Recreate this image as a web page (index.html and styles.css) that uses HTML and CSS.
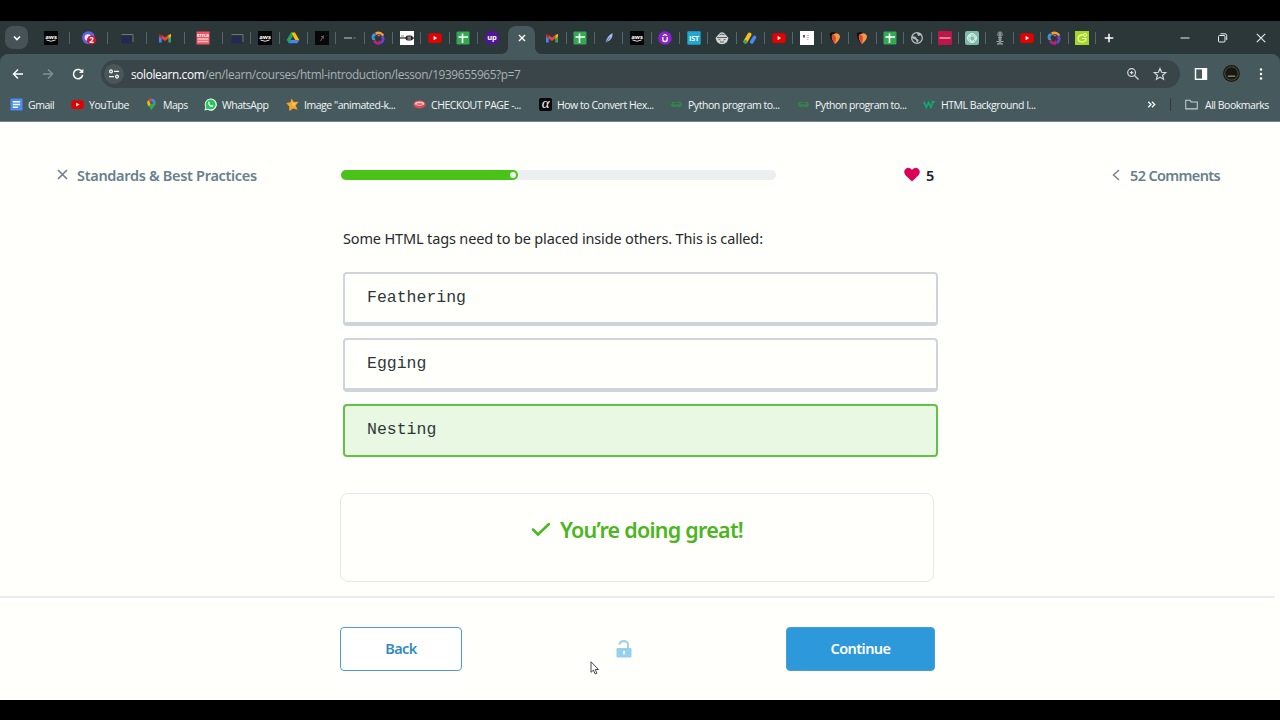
FILE: index.html
```html
<!DOCTYPE html>
<html lang="en">
<head>
    <meta charset="UTF-8">
    <meta name="viewport" content="width=device-width, initial-scale=1.0">
    <title>HTML Introduction</title>
    <link rel="stylesheet" href="styles.css">
</head>
<body>
    <!-- Shared favicons -->
    <svg class="sprite" width="0" height="0">
        <symbol id="aws" viewBox="0 0 14 14">
            <rect width="14" height="14" fill="#050505"/>
            <text x="7" y="7.500" font-size="6" font-weight="700" text-anchor="middle" fill="#fff">aws</text>
            <path d="M2.500 9q4.500 2.500 9 0" fill="none" stroke="#ddd" stroke-width="1"/>
        </symbol>
        <symbol id="laptop" viewBox="0 0 14 14">
            <path d="M1.500 3.500H13V11" fill="none" stroke="#77736a" stroke-width="1"/>
            <path d="M1.500 5h10v7.500h-10z" fill="#222a50"/>
        </symbol>
        <symbol id="gmail" viewBox="0 0 14 14">
            <path d="M1 3.500v8h2.700V6z" fill="#4285f4"/>
            <path d="M10.300 6v5.500H13v-8z" fill="#34a853"/>
            <path d="M1 3l2.700 1v3.500L1 5.500z" fill="#c5221f"/>
            <path d="M13 3l-2.700 1v3.500L13 5.500z" fill="#fbbc04"/>
            <path d="M3.700 4L7 6.500 10.300 4v3.500L7 10 3.700 7.500z" fill="#ea4335"/>
        </symbol>
        <symbol id="youtube" viewBox="0 0 14 14">
            <rect x="0.300" y="2.300" width="13.400" height="9.600" rx="2.500" fill="#e60000"/>
            <path d="M5.600 5v4.200L9.200 7.100z" fill="#fff"/>
        </symbol>
        <symbol id="sheets" viewBox="0 0 14 14">
            <rect x="0.500" y="0.500" width="13" height="13" rx="1" fill="#34a853"/>
            <path d="M6.500 2.500v9.500M2.500 6h9.500" stroke="#fff" stroke-width="1.600"/>
        </symbol>
        <symbol id="sololearn" viewBox="0 0 14 14">
            <path d="M4 1.500Q9-1.500 13 3.500L12 6Q9 1.500 5.500 4z" fill="#f0a03c"/>
            <path d="M12.500 4.500Q15.500 9.500 10.500 13L8.500 12Q12.500 9 9.500 6z" fill="#6a45cc"/>
            <path d="M9 13.700Q3.500 14.500 2 10L4 9.500Q7 12.500 9.500 8.500z" fill="#c41c78"/>
            <path d="M1.500 9Q-1 4.500 3 2L5.500 4Q1.500 5.500 5 9.500z" fill="#3b96d6"/>
            <path d="M6 4.500Q8 2.500 9.500 4.500L8 5.500z" fill="#e05a4a"/>
        </symbol>
        <symbol id="parrot" viewBox="0 0 14 14">
            <path d="M2 2Q7-1 9 4L6 12Q1 7 2 2z" fill="#151010"/>
            <path d="M4 4Q10 0 12 5 12 9 7 13 3 8 4 4z" fill="#f49a45"/>
            <path d="M4 4Q7 3 8 7L7 13Q3 8 4 4z" fill="#df4932"/>
        </symbol>
        <symbol id="geeks" viewBox="0 0 14 14">
            <path d="M6 5.300a2.200 2.200 0 1 0 .5 2.200H1M8 5.300a2.200 2.200 0 1 1-.5 2.200H13" fill="none" stroke="#2f8d46" stroke-width="1.200"/>
        </symbol>
    </svg>

    <div class="browser">
        <div class="tab-strip">
            <div class="tab-search">
                <svg width="10" height="10" viewBox="0 0 10 10"><path d="M2 3.500l3 3 3-3" fill="none" stroke="#fff" stroke-width="1.600"/></svg>
            </div>
            <div class="tab wide"><svg><use href="#aws"/></svg></div>
            <div class="tab wide">
                <svg viewBox="0 0 14 14">
                    <circle cx="6.500" cy="6.700" r="6.500" fill="#6360d8"/>
                    <circle cx="6" cy="6.500" r="3.300" fill="#e8e8ff"/>
                    <circle cx="9.500" cy="9" r="4.500" fill="#cf1430"/>
                    <text x="9.500" y="12" font-size="8" font-weight="700" text-anchor="middle" fill="#fff">2</text>
                </svg>
            </div>
            <div class="tab wide"><svg><use href="#laptop"/></svg></div>
            <div class="tab wide"><svg><use href="#gmail"/></svg></div>
            <div class="tab wide">
                <svg viewBox="0 0 14 14">
                    <rect x="0.500" y="0.500" width="13" height="13" fill="#f2545f"/>
                    <text x="7" y="6.300" font-size="4" font-weight="700" text-anchor="middle" fill="#fff">RTFLB</text>
                    <path d="M1.500 8h11M1.500 10.500h11" stroke="#ffc3c6" stroke-width="1.300"/>
                </svg>
            </div>
            <div class="tab"><svg><use href="#laptop"/></svg></div>
            <div class="tab"><svg><use href="#aws"/></svg></div>
            <div class="tab">
                <svg viewBox="0 0 14 14">
                    <path d="M5 1.500h4l4.300 7.500H9.200z" fill="#fbbc04"/>
                    <path d="M5 1.500L.7 9l2 3.300L7 5z" fill="#1ea362"/>
                    <path d="M4.500 9h8.800l-2 3.300H2.700z" fill="#4285f4"/>
                </svg>
            </div>
            <div class="tab">
                <svg viewBox="0 0 14 14"><rect width="14" height="14" fill="#080808"/><path d="M5.500 10L8.500 4.500M6 5.500h2.500L8 8" stroke="#666" fill="none"/></svg>
            </div>
            <div class="tab">
                <svg viewBox="0 0 14 14"><path d="M1 7h8" stroke="#a5acac" stroke-width="1.300"/><path d="M10 7h3" stroke="#687475"/></svg>
            </div>
            <div class="tab"><svg><use href="#sololearn"/></svg></div>
            <div class="tab">
                <svg viewBox="0 0 14 14"><rect width="14" height="14" fill="#fff"/><path d="M0 7h14" stroke="#222" stroke-width="1.200"/><rect x="5.500" y="4.500" width="7.500" height="5" rx="2.500" fill="#222"/><path d="M7.500 6.200h3.500M7.500 8h3.500" stroke="#fff" stroke-width="0.700"/><path d="M1 5h3" stroke="#888"/></svg>
            </div>
            <div class="tab"><svg><use href="#youtube"/></svg></div>
            <div class="tab"><svg><use href="#sheets"/></svg></div>
            <div class="tab last">
                <svg viewBox="0 0 14 14"><circle cx="7" cy="7" r="7" fill="#53149c"/><text x="7" y="9" font-size="7.500" font-weight="700" text-anchor="middle" fill="#fff">up</text></svg>
            </div>
            <div class="tab active">
                <svg viewBox="0 0 14 14"><path d="M4 4l6 6M10 4l-6 6" stroke="#fff" stroke-width="1.400"/></svg>
            </div>
            <div class="tab"><svg><use href="#gmail"/></svg></div>
            <div class="tab"><svg><use href="#sheets"/></svg></div>
            <div class="tab">
                <svg viewBox="0 0 14 14"><path d="M3.500 11.500Q5 5 10.500 2 11 7 7.500 9.500z" fill="#a5bce8"/><path d="M4 11l4-4.500" stroke="#5475b9"/></svg>
            </div>
            <div class="tab"><svg><use href="#aws"/></svg></div>
            <div class="tab">
                <svg viewBox="0 0 14 14"><circle cx="7" cy="7" r="6.800" fill="#8c22cf"/><path d="M4.800 6v2.500q0 2 2.200 2t2.200-2V6M4.800 4.800L7 3.500l2.200 1.300" fill="none" stroke="#fff" stroke-width="1.300"/></svg>
            </div>
            <div class="tab">
                <svg viewBox="0 0 14 14"><rect x="0.300" y="0.300" width="13.400" height="13.400" rx="1" fill="#20a7d2"/><text x="7" y="9.500" font-size="7" font-weight="700" text-anchor="middle" fill="#fff">IST</text></svg>
            </div>
            <div class="tab">
                <svg viewBox="0 0 14 14"><path d="M3.500 3.500Q7-1 10.500 3.500l3 3.500-1.500 4Q7 15.500 2 11L.5 7z" fill="#d4d7d7"/><path d="M4.500 4q2.500-2 5 0M3.500 8.300l2 .7M10.500 8.300l-2 .7M5 11h4M2 6.500h10" stroke="#3c4242" stroke-width="0.800" fill="none"/></svg>
            </div>
            <div class="tab">
                <svg viewBox="0 0 14 14"><path d="M2.500 10.500L6.500 3.500" stroke="#f4bd22" stroke-width="4" stroke-linecap="round"/><path d="M8.700 11L11.500 6.300" stroke="#4c88ec" stroke-width="3.600" stroke-linecap="round"/><circle cx="2.500" cy="10.800" r="1.900" fill="#34a853"/></svg>
            </div>
            <div class="tab"><svg><use href="#youtube"/></svg></div>
            <div class="tab">
                <svg viewBox="0 0 14 14"><rect width="14" height="14" fill="#fff"/><path d="M4 4v2.500" stroke="#222" stroke-width="1.500"/><path d="M6.500 4.500h2.500M6.500 6.500h2.500M7 8.500h1.500" stroke="#b99d9d" stroke-width="0.800"/></svg>
            </div>
            <div class="tab narrow"><svg><use href="#parrot"/></svg></div>
            <div class="tab narrow"><svg><use href="#parrot"/></svg></div>
            <div class="tab narrow"><svg><use href="#sheets"/></svg></div>
            <div class="tab narrow">
                <svg viewBox="0 0 14 14"><circle cx="7" cy="7" r="5.300" fill="none" stroke="#b7bdbe" stroke-width="1.300"/><path d="M2 5l4 1 1 2 2 1-2 3-1-3-4-2zM7 2l1 3 4-1-2-2z" fill="#b7bdbe"/></svg>
            </div>
            <div class="tab narrow">
                <svg viewBox="0 0 14 14"><rect width="14" height="14" rx="1" fill="#bd1649"/><path d="M1.500 7h11" stroke="#f4b3c2" stroke-width="1.300"/></svg>
            </div>
            <div class="tab narrow">
                <svg viewBox="0 0 14 14"><rect width="14" height="14" rx="2" fill="#80b8aa"/><g fill="none" stroke="#e8fffa" stroke-width="0.800"><circle cx="7" cy="7" r="4.500"/><path d="M7 2.500l4 4-4 5-4-4zM3 5h6l2 4M5 3v6l4 2"/></g></svg>
            </div>
            <div class="tab narrow">
                <svg viewBox="0 0 14 14"><path d="M4.500 2h5M4 4h6M5 6.500h4M5.500 8.500h3M3.500 10.500h7M4 12.800h6" stroke="#a2a9aa" stroke-width="1.200"/><path d="M7 .5v12" stroke="#858e90" stroke-width="2.500"/></svg>
            </div>
            <div class="tab narrow"><svg><use href="#youtube"/></svg></div>
            <div class="tab narrow"><svg><use href="#sololearn"/></svg></div>
            <div class="tab narrow">
                <svg viewBox="0 0 14 14"><rect width="14" height="14" fill="#a8d52c"/><path d="M8 4q-4-1-5 3 0 4 4 4 4 0 4-3.500H7" fill="none" stroke="#e8ffb0" stroke-width="1.200"/><circle cx="10" cy="4" r="1.500" fill="none" stroke="#e8ffb0"/></svg>
            </div>
            <svg class="new-tab" viewBox="0 0 14 14"><path d="M7 2.700v8.600M2.700 7h8.600" stroke="#fff" stroke-width="1.500"/></svg>
            <div class="window-buttons">
                <svg viewBox="0 0 14 14"><path d="M2.500 7h9" stroke="#e8eeee" stroke-width="1"/></svg>
                <svg viewBox="0 0 14 14"><rect x="2.500" y="4.500" width="6.500" height="6.500" rx="1" fill="none" stroke="#e8eeee"/><path d="M4.500 2.800h4.500q1.700 0 1.700 1.700V9" fill="none" stroke="#e8eeee"/></svg>
                <svg viewBox="0 0 14 14"><path d="M2.800 2.800l8.400 8.400M11.200 2.800l-8.400 8.400" stroke="#e8eeee" stroke-width="1.100"/></svg>
            </div>
        </div>

        <div class="toolbar">
            <div class="nav-buttons">
                <svg viewBox="0 0 14 14"><path d="M12 7H2.500M7 2.500L2.500 7 7 11.500" fill="none" stroke="#fff" stroke-width="1.400"/></svg>
                <svg viewBox="0 0 14 14"><path d="M2 7h9.500M7 2.500L11.500 7 7 11.500" fill="none" stroke="#839194" stroke-width="1.300"/></svg>
                <svg viewBox="0 0 14 14"><path d="M11.300 5.200A4.600 4.600 0 1 0 11.600 8" fill="none" stroke="#fff" stroke-width="1.500"/><path d="M12.300 1.800v4.300H8z" fill="#fff"/></svg>
            </div>
            <div class="address-bar">
                <div class="site-info">
                    <svg width="12" height="12" viewBox="0 0 12 12"><g fill="none" stroke="#eef3f3" stroke-width="1.300"><circle cx="3" cy="3.400" r="1.400"/><path d="M6 3.400h5M1 8.600h5"/><circle cx="9" cy="8.600" r="1.400"/></g></svg>
                </div>
                <span class="url"><b>sololearn.com</b>/en/learn/courses/html-introduction/lesson/1939655965?p=7</span>
                <svg viewBox="0 0 14 14"><g fill="none" stroke="#d3dadb" stroke-width="1.200"><circle cx="5.600" cy="5.600" r="3.900"/><path d="M8.500 8.500l4 4M5.600 3.900v3.400M3.900 5.600h3.400"/></g></svg>
                <svg viewBox="0 0 14 14"><path d="M7 1.500l1.600 3.800 4.100.3-3.100 2.700 1 4L7 10.100l-3.600 2.200 1-4-3.100-2.700 4.100-.3z" fill="none" stroke="#d3dadb" stroke-width="1.200"/></svg>
            </div>
            <div class="toolbar-right">
                <svg viewBox="0 0 14 14"><rect x="1.500" y="1.700" width="11" height="10.600" fill="none" stroke="#fff" stroke-width="1.400"/><path d="M8 2h4.500v10H8z" fill="#fff"/></svg>
                <svg class="avatar" viewBox="0 0 16 16"><circle cx="8" cy="8" r="7.900" fill="#171815"/><circle cx="8" cy="8" r="6.300" fill="none" stroke="#625a32" stroke-width="0.800"/><path d="M4.500 10.500h7" stroke="#aaa88c"/></svg>
                <svg viewBox="0 0 14 14"><g fill="#fff"><circle cx="7" cy="2.500" r="1.200"/><circle cx="7" cy="7" r="1.200"/><circle cx="7" cy="11.500" r="1.200"/></g></svg>
            </div>
        </div>

        <div class="bookmarks">
            <div class="bookmark"><svg viewBox="0 0 14 14"><rect x="0.500" y="0.500" width="13" height="13" rx="1" fill="#4a8cf0"/><path d="M3 4h8M3 7h8M3 10h5.500" stroke="#fff" stroke-width="1.500"/></svg><span>Gmail</span></div>
            <div class="bookmark"><svg><use href="#youtube"/></svg><span>YouTube</span></div>
            <div class="bookmark">
                <svg viewBox="0 0 14 14"><path d="M7 .8A4.500 4.500 0 0 0 2.500 5.300Q2.500 8 5 10.300 6.500 12 7 13.500 7.500 12 9 10.300 11.500 8 11.500 5.300A4.500 4.500 0 0 0 7 .8z" fill="#34a853"/><path d="M3.500 2.500L7 5.500 4 9Q2 6 2.500 4z" fill="#fbbc04"/><path d="M3.500 2.500Q5 .6 7 .8L9 3 6 6z" fill="#ea4335"/><path d="M7 .8Q10.500 1 11.300 4L8 7z" fill="#4285f4"/><circle cx="7" cy="5.200" r="1.600" fill="#465a5e"/></svg>
                <span>Maps</span>
            </div>
            <div class="bookmark">
                <svg viewBox="0 0 14 14"><path d="M.5 13.500l1-3.500A6.500 6.500 0 1 1 4 12.700z" fill="#fff"/><path d="M1.700 12.300l.8-2.500A5.400 5.400 0 1 1 4.300 11.600z" fill="#25c75b"/><path d="M4.400 4.200q.8-1 1.400.2l.4 1-.6.8q.8 1.400 2.200 2l.8-.8 1.500.8q0 1.600-1.800 1.600Q4.500 8.700 4.400 4.200z" fill="#fff"/></svg>
                <span>WhatsApp</span>
            </div>
            <div class="bookmark"><svg viewBox="0 0 14 14"><path d="M6 .5l2.500 3.800 5-.2-3 4 2 4.500-4.800-1.400L3.500 14V9.200L.3 5.500l4.500-1z" fill="#f5a72e"/><path d="M6 3l1.500 3 3-.5-2.500 3z" fill="#ffe060"/></svg><span>Image "animated-k...</span></div>
            <div class="bookmark"><svg viewBox="0 0 14 14"><ellipse cx="7" cy="7" rx="6.700" ry="4.200" fill="#dc4a58"/><ellipse cx="7" cy="6" rx="5" ry="2.300" fill="#ffc4c3"/><path d="M4 6.500h6" stroke="#b42037"/></svg><span>CHECKOUT PAGE -...</span></div>
            <div class="bookmark"><span class="alpha">α</span><span>How to Convert Hex...</span></div>
            <div class="bookmark"><svg><use href="#geeks"/></svg><span>Python program to...</span></div>
            <div class="bookmark"><svg><use href="#geeks"/></svg><span>Python program to...</span></div>
            <div class="bookmark"><svg viewBox="0 0 14 14"><path d="M1 4l2.500 6L6 5l2.500 5L11 4M9 4h4" fill="none" stroke="#0caa73" stroke-width="1.800"/></svg><span>HTML Background I...</span></div>
            <div class="bookmark-more">
                <svg viewBox="0 0 14 14"><path d="M3.500 4l3 3-3 3M7.500 4l3 3-3 3" fill="none" stroke="#fff" stroke-width="1.300"/></svg>
            </div>
            <div class="bookmark all"><svg viewBox="0 0 14 14"><path d="M.8 2.500h4.500l1.500 1.700h6.400v7.500H.8z" fill="none" stroke="#c8d0d1" stroke-width="1.100"/></svg><span>All Bookmarks</span></div>
        </div>
    </div>

    <main>
        <header>
            <div class="lesson-title">
                <svg width="11" height="11" viewBox="0 0 11 11"><path d="M1 1l9 9M10 1l-9 9" stroke="#687f93" stroke-width="1.600"/></svg>
                <span>Standards &amp; Best Practices</span>
            </div>
            <div class="progress"><div class="progress-fill"><div class="progress-dot"></div></div></div>
            <div class="hearts">
                <svg width="16" height="15" viewBox="0 0 16 15"><path d="M8 14.500L1.500 8.200Q-.8 5.300 1 2.500 4-.9 8 2.700 12-.9 15 2.500 16.800 5.300 14.500 8.200z" fill="#dc0058"/></svg>
                <span>5</span>
            </div>
            <div class="comments">
                <svg width="8" height="12" viewBox="0 0 8 12"><path d="M7 1L1.500 6 7 11" fill="none" stroke="#748591" stroke-width="1.500"/></svg>
                <span>52 Comments</span>
            </div>
        </header>

        <div class="quiz">
            <p class="question">Some HTML tags need to be placed inside others. This is called:</p>
            <div class="option">Feathering</div>
            <div class="option">Egging</div>
            <div class="option correct">Nesting</div>
        </div>

        <div class="feedback">
            <svg width="20" height="15" viewBox="0 0 20 15"><path d="M2 7.500l5 5L18 2" fill="none" stroke="#4bb522" stroke-width="2.500" stroke-linecap="round"/></svg>
            <span>You’re doing great!</span>
        </div>

        <footer>
            <button class="back">Back</button>
            <svg class="lock" width="16" height="18" viewBox="0 0 16 18"><rect x="0.500" y="8" width="15" height="9.500" rx="1" fill="#96d0ee"/><path d="M3.500 4.700Q4 1 8 1q4 .3 4 4v3" fill="none" stroke="#9bcfe4" stroke-width="1.800"/><circle cx="8" cy="12" r="1.200" fill="#fff"/><path d="M8 12v3" stroke="#fff"/></svg>
            <button class="continue">Continue</button>
        </footer>
    </main>

    <svg class="cursor" width="10" height="14" viewBox="0 0 10 14"><path d="M1 .8v10.500l2.400-2.200L5.200 13l1.700-.8-1.700-3.700h3.300z" fill="#fff" stroke="#333" stroke-width="0.900"/></svg>
</body>
</html>
```
FILE: styles.css
```css
* {
    box-sizing: border-box;
}
body {
    margin: 0;
    height: 720px;
    padding: 21px 0 20px;
    background-color: #000;
    font-family: "Noto Sans", sans-serif;
    overflow: hidden;
}
svg {
    display: block;
    flex-shrink: 0;
}
.sprite {
    display: none;
}
.browser {
    height: 101px;
    background-color: #2b3739;
    font-family: "Open Sans", "Noto Sans", sans-serif;
}

/* Tabs */
.tab-strip {
    height: 33px;
    padding-left: 5px;
    display: flex;
    align-items: center;
}
.tab-search {
    width: 23px;
    height: 23px;
    margin-right: 4px;
    border-radius: 8px;
    background-color: #465255;
    display: flex;
    align-items: center;
    justify-content: center;
}
.tab {
    width: 28.350px;
    height: 12px;
    border-right: 1px solid #56666a;
    display: flex;
    align-items: center;
    justify-content: center;
    flex-shrink: 0;
}
.tab svg {
    width: 14px;
    height: 14px;
}
.tab.wide {
    width: 38.200px;
}
.tab.narrow {
    width: 27.430px;
}
.tab.last {
    border: none;
}
.tab.active {
    width: 27px;
    height: 28px;
    margin: 5px 3px 0 2px;
    padding-bottom: 4px;
    border: none;
    border-radius: 8px 8px 0 0;
    background-color: #465a5e;
    position: relative;
}
.tab.active::before,
.tab.active::after {
    content: "";
    position: absolute;
    bottom: 0;
    width: 6px;
    height: 6px;
}
.tab.active::before {
    left: -6px;
    background: radial-gradient(circle at 0 0, transparent 5.500px, #465a5e 6px);
}
.tab.active::after {
    right: -6px;
    background: radial-gradient(circle at 100% 0, transparent 5.500px, #465a5e 6px);
}
.new-tab {
    width: 14px;
    margin-left: 5.500px;
}
.window-buttons {
    margin-left: auto;
    padding-right: 12px;
    display: flex;
    gap: 24px;
}
.window-buttons svg {
    width: 14px;
}

/* Toolbar */
.toolbar {
    height: 39px;
    border-radius: 8px 8px 0 0;
    background-color: #465a5e;
    display: flex;
    align-items: center;
}
.nav-buttons {
    width: 101px;
    padding-left: 11px;
    display: flex;
    gap: 16px;
}
.nav-buttons svg,
.address-bar > svg,
.toolbar-right svg {
    width: 14px;
    height: 14px;
}
.address-bar {
    width: 1079px;
    height: 28px;
    padding: 0 13px 0 3px;
    border-radius: 14px;
    background-color: #394548;
    display: flex;
    align-items: center;
    gap: 13px;
}
.site-info {
    width: 20px;
    height: 20px;
    border-radius: 50%;
    background-color: #4a5659;
    display: flex;
    align-items: center;
    justify-content: center;
}
.url {
    flex: 1;
    margin-left: -6px;
    font-size: 11.800px;
    letter-spacing: -0.350px;
    color: #a9b2b4;
}
.url b {
    font-weight: 400;
    color: #fff;
}
.toolbar-right {
    flex: 1;
    padding-left: 14px;
    display: flex;
    align-items: center;
    gap: 15px;
}
.toolbar-right .avatar {
    width: 17px;
    height: 17px;
}
.toolbar-right svg:last-child {
    margin-left: -1px;
}

/* Bookmarks */
.bookmarks {
    height: 29px;
    padding: 0 10px 5px;
    border-bottom: 1px solid #72858a;
    background-color: #465a5e;
    color: #f2f6f6;
    font-size: 10.500px;
    display: grid;
    grid-template-columns: 61px 74px 59px 82px 127px 126px 131px 127px 126px 222px 40px 1fr;
    align-items: center;
}
.bookmark {
    display: flex;
    align-items: center;
    gap: 5px;
    white-space: nowrap;
    letter-spacing: -0.470px;
}
.bookmark svg,
.bookmark-more svg {
    width: 13px;
    height: 13px;
}
.alpha {
    width: 13px;
    height: 13px;
    border-radius: 2px;
    background-color: #080808;
    font: italic 15px/11px "Liberation Serif", serif;
    text-align: center;
}
.bookmark-more {
    width: 26px;
    border-right: 1px solid #2d3a3d;
}
.bookmark.all {
    gap: 7px;
}

/* Lesson */
main {
    height: 578px;
    background-color: #fffffc;
}
header {
    height: 107px;
    padding: 0 60px 2px 57px;
    display: grid;
    grid-template-columns: 284px 435px 128px 1fr;
    align-items: center;
    font-size: 14.500px;
    font-weight: 600;
    color: #687f8e;
}
.lesson-title {
    display: flex;
    align-items: center;
    gap: 9px;
    white-space: nowrap;
    letter-spacing: -0.320px;
}
.progress {
    height: 10px;
    border-radius: 5px;
    background-color: #ebeff0;
}
.progress-fill {
    width: 177px;
    height: 10px;
    padding: 2px;
    border-radius: 5px;
    background-color: #49c317;
    display: flex;
    justify-content: flex-end;
}
.progress-dot {
    width: 6px;
    height: 6px;
    border-radius: 50%;
    background-color: #efffeb;
}
.hearts {
    padding-left: 128px;
    display: flex;
    align-items: center;
    gap: 6px;
    color: #17212a;
}
.comments {
    display: flex;
    align-items: center;
    justify-content: flex-end;
    gap: 10px;
    white-space: nowrap;
    letter-spacing: -0.650px;
}
.quiz {
    width: 595px;
    margin-left: 343px;
}
.question {
    height: 43px;
    margin: 0;
    line-height: 18px;
    font-size: 14.500px;
    letter-spacing: -0.150px;
    color: #26292d;
    white-space: nowrap;
}
.option {
    height: 54px;
    margin-bottom: 12px;
    padding: 0 22px 2px;
    border: 2px solid #ced4da;
    border-bottom-width: 4px;
    border-radius: 4px;
    display: flex;
    align-items: center;
    font-family: "Liberation Mono", monospace;
    font-size: 16.500px;
    color: #30373b;
}
.option.correct {
    height: 53px;
    margin-bottom: 0;
    border: 2px solid #62c246;
    background-color: #e8f8e2;
}
.feedback {
    width: 594px;
    height: 89px;
    margin: 36px 0 14px 340px;
    padding-bottom: 17px;
    border: 1px solid #e5e8e8;
    border-radius: 8px;
    display: flex;
    align-items: center;
    justify-content: center;
    gap: 9px;
    font-size: 21.500px;
    font-weight: 600;
    letter-spacing: -0.750px;
    color: #4bb522;
}
footer {
    width: 1275px;
    height: 104px;
    padding: 0 340px;
    border-top: 2px solid #ebeced;
    display: flex;
    align-items: center;
    justify-content: space-between;
}
button {
    height: 44px;
    padding: 0 0 2px;
    border: 1px solid #4b9ecb;
    border-radius: 4px;
    font-family: inherit;
    font-size: 14.500px;
    font-weight: 600;
    letter-spacing: -0.550px;
}
.back {
    width: 122px;
    background-color: #fff;
    color: #338cc1;
}
.continue {
    width: 149px;
    background-color: #2d99db;
    color: #fff;
}
.cursor {
    position: absolute;
    left: 590px;
    top: 661px;
}
```
